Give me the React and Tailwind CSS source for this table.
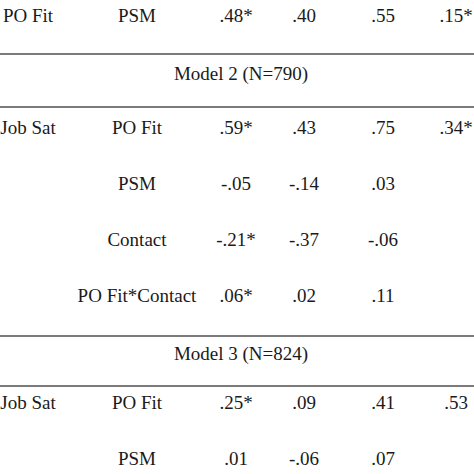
import React from "react";

const cols = "grid grid-cols-[76px_142px_56px_80px_78px_68px] ml-[-10px] w-[500px] text-center whitespace-nowrap";

function Row({ cells, h }) {
  return (
    <div className={`${cols} ${h} items-center`}>
      {cells.map((c, i) => (
        <div key={i}>{c}</div>
      ))}
    </div>
  );
}

function Rule() {
  return <div className="h-[2px] w-full bg-[#7a7a7a]" />;
}

export default function App() {
  return (
    <div className="w-[474px] h-[474px] overflow-hidden bg-white text-[#1a1a1a] text-[19px] font-['Liberation_Serif']">
      <div className="flex flex-col">
        <Row h="h-[32px]" cells={["PO Fit", "PSM", ".48*", ".40", ".55", ".15*"]} />
        <div className="mt-[21px]">
          <Rule />
        </div>
        <div className="h-[38px] flex items-center justify-center pl-[8px]">Model 2 (N=790)</div>
        <div className="mt-[13px]">
          <Rule />
        </div>
        <div className="flex flex-col gap-4">
          <Row h="h-[40px]" cells={["Job Sat", "PO Fit", ".59*", ".43", ".75", ".34*"]} />
          <Row h="h-[40px]" cells={["", "PSM", "-.05", "-.14", ".03", ""]} />
          <Row h="h-[40px]" cells={["", "Contact", "-.21*", "-.37", "-.06", ""]} />
          <Row h="h-[40px]" cells={["", "PO Fit*Contact", ".06*", ".02", ".11", ""]} />
        </div>
        <div className="mt-[19px]">
          <Rule />
        </div>
        <div className="h-[34px] flex items-center justify-center pl-[8px]">Model 3 (N=824)</div>
        <div className="mt-[14px]">
          <Rule />
        </div>
        <div className="flex flex-col gap-6">
          <Row h="h-[32px]" cells={["Job Sat", "PO Fit", ".25*", ".09", ".41", ".53"]} />
          <Row h="h-[32px]" cells={["", "PSM", ".01", "-.06", ".07", ""]} />
        </div>
      </div>
    </div>
  );
}
